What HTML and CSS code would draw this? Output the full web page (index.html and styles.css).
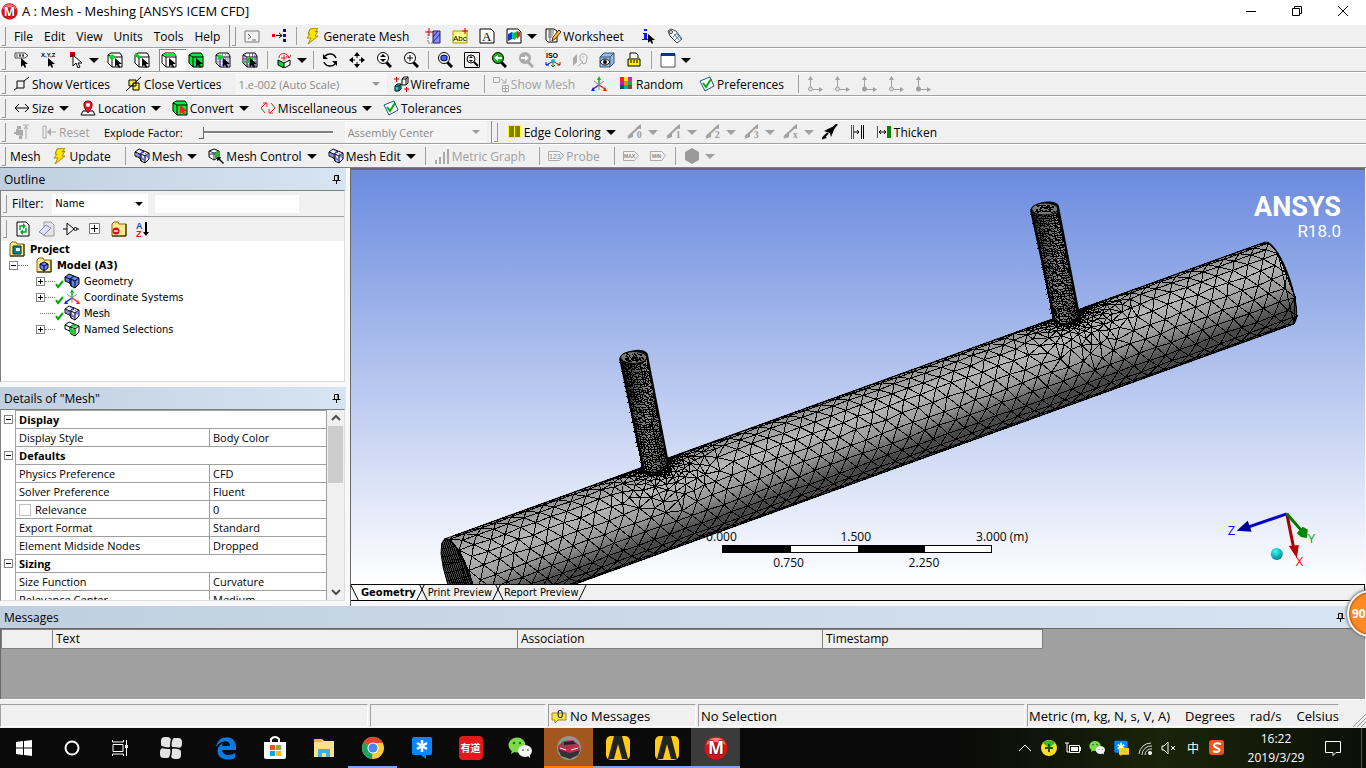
FILE: index.html
```html
<!DOCTYPE html>
<html lang="en">
<head>
    <meta charset="UTF-8">
    <meta name="viewport" content="width=device-width, initial-scale=1.0">
    <title>A : Mesh - Meshing [ANSYS ICEM CFD]</title>
    <link rel="stylesheet" href="styles.css">
</head>
<body>
    <!-- icon sprite -->
    <svg class="sprite" aria-hidden="true">
        <symbol id="cursor" viewBox="0 0 16 16"><path d="M8 6v9l2-2 2 3 1-1-1-3h3z" fill="#000"/></symbol>
        <symbol id="box" viewBox="0 0 16 16"><path d="M1 3l3-2h9l2 3v11H5l-4-4z" fill="inherit" stroke="#000"/><path d="M1 3l4 2h10M5 5v10" fill="none" stroke="#000"/></symbol>
        <symbol id="cubes" viewBox="0 0 16 16"><path d="M1 4l4-3 5 2 5 2v6l-4 4-4-2-1-3-5-2z" fill="inherit" stroke="#000"/><path d="M1 4l5 2 4-3M6 6v5M7 6l4 2 4-3M11 8v7M7 6v7" fill="none" stroke="#000"/></symbol>
        <symbol id="lens" viewBox="0 0 16 16"><path d="M10 10l5 5" stroke="#000" stroke-width="3"/><circle cx="7" cy="6" r="5.500" fill="inherit" stroke="#000"/></symbol>
        <symbol id="console" viewBox="0 0 16 16"><path d="M1 3h14v11H1z" fill="#f4f4f4" stroke="#777"/><path d="M4 6l3 3-3 2M8 12h4" fill="none" stroke="#666"/></symbol>
        <symbol id="branch" viewBox="0 0 16 16"><path d="M1 6h3v3H1z" fill="#e00"/><path d="M12 1h3v3h-3zM12 6h3v3h-3zM12 11h3v3h-3z" fill="#00f"/><path d="M5 7.500h5M8 5l3 2.500L8 10" fill="none" stroke="#000"/></symbol>
        <symbol id="bolt" viewBox="0 0 16 16"><path d="M5 1l8-1-3 4 3-1-3 5h3L3 16l3-6H2l3-4H3z" fill="#ffe600" stroke="#a80"/></symbol>
        <symbol id="section" viewBox="0 0 16 16"><path d="M8 3h7v12H8z" fill="#88f" stroke="#225"/><path d="M3 3v12h5" fill="none" stroke="#777" stroke-dasharray="2 1"/><path d="M8 9l5-6M8 14l7-8" stroke="#226"/><path d="M0 4h9M4 0v8" stroke="#d00"/></symbol>
        <symbol id="abc" viewBox="0 0 16 16"><path d="M1 3h14v12H1z" fill="#ffff8c" stroke="#a90"/><text x="1" y="13" font-size="8" font-family="Liberation Sans">Abc</text><path d="M10 3h6M13 0v6" stroke="#d00"/></symbol>
        <symbol id="letter" viewBox="0 0 16 16"><path d="M1 1h11l3 3v11H1z" fill="#fff" stroke="#000"/><text x="3" y="13" font-size="13" font-family="Liberation Serif">A</text></symbol>
        <symbol id="palette" viewBox="0 0 16 16"><path d="M1 1h11l3 3v11H1z" fill="#fff" stroke="#000"/><path d="M2 6l4-2v7l-4 2z" fill="#13c"/><path d="M6 4l3 1v7l-3-1z" fill="#0bd"/><path d="M8 5l3-2v6l-3 3z" fill="#1b2"/><path d="M11 3l3 1v4l-3 3z" fill="#e22"/></symbol>
        <symbol id="sheet" viewBox="0 0 16 16"><path d="M1 1h8l3 2v11H3L1 12z" fill="#fff" stroke="#000"/><path d="M3 3h6M3 5h6M3 7h5M3 9h4M5 1v12" stroke="#666"/><path d="M7 13l1-4 6-7 2 2-6 7z" fill="#fc3" stroke="#520"/></symbol>
        <symbol id="info" viewBox="0 0 16 16"><path d="M4 1h3v2H4zM3 5h4v6h2v1H2v-1h2V6H3z" fill="#11f"/><use href="#cursor"/></symbol>
        <symbol id="tag" viewBox="0 0 16 16"><path d="M1 3l3-2 5 2 6 8-5 4-7-7z" fill="#fff" stroke="#444"/><circle cx="4" cy="4" r="1.500" fill="none" stroke="#444"/><path d="M7 6l5 6M9 5l5 6M6 9l4-4M8 12l4-4" stroke="#48b"/></symbol>
        <symbol id="label-pick" viewBox="0 0 16 16"><path d="M1 1h10l3 2.500L11 6H1z" fill="#fff" stroke="#444"/><path d="M3 2v3M5.500 2.500h1v2h-1zM8.500 2.500h1v2h-1z" fill="none" stroke="#444"/><path d="M7 6v9l2-2 2 3 1-1-1-3h3z"/></symbol>
        <symbol id="xyz" viewBox="0 0 16 16"><text x="0" y="5" font-size="6" font-weight="bold" font-family="Liberation Sans">X,Y,Z</text><path d="M7 6v9l2-2 2 3 1-1-1-3h3z"/></symbol>
        <symbol id="pick" viewBox="0 0 16 16"><path d="M2 0h5v5H2z" fill="#b00"/><path d="M5 3v11l3-3 2 5 2-1-2-4h4z" fill="#fff" stroke="#000"/></symbol>
        <symbol id="vertex" viewBox="0 0 16 16"><use href="#box" fill="#fff"/><circle cx="5" cy="5" r="2.500" fill="#0d2"/><use href="#cursor"/></symbol>
        <symbol id="edge" viewBox="0 0 16 16"><use href="#box" fill="#fff"/><path d="M1 2l5 4" stroke="#0c2" stroke-width="3"/><use href="#cursor"/></symbol>
        <symbol id="face" viewBox="0 0 16 16"><use href="#box" fill="#fff"/><path d="M2 3l3-2h8l2 3H5z" fill="#0e3"/><use href="#cursor"/></symbol>
        <symbol id="body" viewBox="0 0 16 16"><use href="#box" fill="#0e3"/><use href="#cursor"/></symbol>
        <symbol id="node" viewBox="0 0 16 16"><use href="#box" fill="#fff"/><path d="M3 2v11M7.500 1v14M10.500 1v14M13 2v13M1 7h14M2 10h13M4 13h11" stroke="#77c" stroke-width="0.700"/><circle cx="5" cy="5" r="2.500" fill="#0d2"/><use href="#cursor"/></symbol>
        <symbol id="element" viewBox="0 0 16 16"><use href="#box" fill="#fff"/><path d="M3 2v11M7.500 1v14M10.500 1v14M13 2v13M1 7h14M2 10h13M4 13h11" stroke="#448" stroke-width="0.800"/><path d="M5 5h6v6H5z" fill="#0c2"/><use href="#cursor"/></symbol>
        <symbol id="view-rot" viewBox="0 0 16 16"><path d="M2 8l6 3v5l-6-3z" fill="#0d2" stroke="#000"/><path d="M8 11l6-3v5l-6 3z" fill="#fff" stroke="#000"/><path d="M3 6c0-6 9-6 10 0M13 6l-3-2M13 6l2-3M8 3v6M5 6h6" fill="none" stroke="#c22"/></symbol>
        <symbol id="rotate" viewBox="0 0 16 16"><path d="M14 6C12 1 6 1 3 4M2 10c2 5 8 5 11 2" fill="none" stroke="#000" stroke-width="1.500"/><path d="M1 2v5h5zM15 14V9h-5z"/></symbol>
        <symbol id="pan" viewBox="0 0 16 16"><path d="M8 2v4M8 10v4M2 8h4M10 8h4" stroke="#000"/><path d="M8 0l3 4H5zM8 16l3-4H5zM0 8l4-3v6zM16 8l-4-3v6z"/></symbol>
        <symbol id="zoom-ud" viewBox="0 0 16 16"><use href="#lens" fill="#fff"/><path d="M7 2l3 3H4zM7 10l3-3H4z"/></symbol>
        <symbol id="zoom-in" viewBox="0 0 16 16"><use href="#lens" fill="#fff"/><path d="M7 3v6M4 6h6" stroke="#000"/></symbol>
        <symbol id="zoom-cube" viewBox="0 0 16 16"><use href="#lens" fill="#fff"/><path d="M4 4l3-1 3 1v4L7 9 4 8z" fill="#46f" stroke="#003"/></symbol>
        <symbol id="zoom-fit" viewBox="0 0 16 16"><path d="M0.500 0.500h15v15h-15z" fill="none" stroke="#000"/><path d="M10 10l4 4" stroke="#000" stroke-width="2"/><circle cx="7" cy="7" r="4" fill="#fff" stroke="#000"/><path d="M7 4l2 2H5zM7 10l2-2H5z"/></symbol>
        <symbol id="zoom-prev" viewBox="0 0 16 16"><use href="#lens" fill="#2a2"/><path d="M3 6l4-3v2h4v2H7v2z" fill="#fff"/></symbol>
        <symbol id="zoom-next" viewBox="0 0 16 16"><path d="M10 10l5 5" stroke="#aaa" stroke-width="3"/><circle cx="7" cy="6" r="6" fill="#aaa"/><path d="M11 6L7 3v2H3v2h4v2z" fill="#fff"/></symbol>
        <symbol id="iso" viewBox="0 0 16 16"><text x="1" y="6" font-size="7" font-weight="bold" font-family="Liberation Sans">ISO</text><path d="M8 8v7M6 13l2 2 2-2" fill="none" stroke="#080"/><path d="M7 10l-6 3M1 10v3h3" fill="none" stroke="#00c"/><path d="M9 10l6 3M15 10v3h-3" fill="none" stroke="#d00"/><circle cx="8" cy="9" r="2" fill="#0bb"/></symbol>
        <symbol id="look" viewBox="0 0 16 16"><path d="M1 6l4-4v8l-4 4z" fill="#aaa"/><path d="M8 4c2-4 7-2 7 2l-1 5-3 1-1-3-2-1z" fill="none" stroke="#aaa"/><path d="M6 14l5-4M10 5h2" stroke="#aaa"/></symbol>
        <symbol id="eye-cube" viewBox="0 0 16 16"><path d="M1 5l4-4h10v10l-4 4H1z" fill="#9bd" stroke="#357"/><path d="M1 5h10v10M11 5l4-4" fill="none" stroke="#357"/><path d="M1 10c3-4 7-4 10 0-3 4-7 4-10 0" fill="#fff" stroke="#000"/><circle cx="6" cy="10" r="2"/></symbol>
        <symbol id="print" viewBox="0 0 16 16"><path d="M4 6V1h6l2 2v3" fill="#fff" stroke="#000"/><path d="M2 7h12v7H2z" fill="#fe0" stroke="#000"/><path d="M5 8v3M8 8v3M11 8v3" stroke="#000"/></symbol>
        <symbol id="window" viewBox="0 0 16 16"><path d="M1 2h14v13H1z" fill="#fff" stroke="#555"/><path d="M1 1h14v3H1z" fill="#013a7c"/></symbol>
        <symbol id="show-vert" viewBox="0 0 16 16"><path d="M3 5h7v7H3zM0 14l3-2M10 5l5-4" fill="none" stroke="#000"/></symbol>
        <symbol id="close-vert" viewBox="0 0 16 16"><path d="M3 4h7v6H3zM7 7h6v7H7z" fill="#fe3" stroke="#000"/><path d="M0 15l15-14" stroke="#000"/></symbol>
        <symbol id="wire" viewBox="0 0 16 16"><path d="M2 10l2-2h4v5l-2 2H2zM2 10h4v5M6 10l2-2" fill="#0dd" stroke="#000"/><path d="M9 3l2-2h4v6l-2 2H9zM9 3h4v6M13 3l2-2" fill="#fff" stroke="#000"/><path d="M1 3h5M3.500 1v5M11 13h5M13.500 11v5" stroke="#d00"/></symbol>
        <symbol id="show-mesh" viewBox="0 0 16 16"><path d="M0.500 1.500h6v5h-6zM9.500 9.500h6v6h-6zM9 12.500h6M12.500 9v6M8 3l5 4M13 3v4H9" fill="none" stroke="#aaa"/></symbol>
        <symbol id="axes" viewBox="0 0 16 16"><path d="M8 9V2" stroke="#0b2" stroke-width="1.500"/><path d="M8 0l2 4H6z" fill="#0b2"/><path d="M8 9l6 4" stroke="#e22" stroke-width="1.500"/><path d="M16 15h-4l2-4z" fill="#e22"/><path d="M8 9l-6 4" stroke="#22d" stroke-width="1.500"/><path d="M0 15h4l-2-4z" fill="#22d"/><path d="M8 9l5-4M8 9L3 5M8 9v5" stroke="#888"/></symbol>
        <symbol id="random" viewBox="0 0 16 16"><path d="M2 1h4v4H2z" fill="#e22"/><path d="M6 1h4v4H6z" fill="#fe0"/><path d="M10 1h4v4h-4z" fill="#c2c"/><path d="M2 5h4v4H2z" fill="#a2c"/><path d="M6 5h4v4H6z" fill="#e80"/><path d="M10 5h4v4h-4z" fill="#2a3"/><path d="M2 9h4v4H2z" fill="#055"/><path d="M6 9h4v4H6z" fill="#0ad"/><path d="M10 9h4v4h-4z" fill="#a33"/></symbol>
        <symbol id="prefs" viewBox="0 0 16 16"><path d="M1 5l10-4 4 9-9 5z" fill="#fff" stroke="#258"/><path d="M4 7l3 4 5-8" fill="none" stroke="#0a1" stroke-width="2"/></symbol>
        <symbol id="csys" viewBox="0 0 16 16"><path d="M3.500 12V3M5 13.500h9" stroke="#a0a0a0"/><path d="M3.500 0L6 4H1zM16 13.500L12 11v5z" fill="#a0a0a0"/><circle cx="3.500" cy="13" r="2" fill="#ddd" stroke="#a0a0a0"/></symbol>
        <symbol id="csys-solid" viewBox="0 0 16 16"><path d="M3.500 12V3M5 13.500h9" stroke="#a0a0a0"/><path d="M3.500 0L6 4H1zM16 13.500L12 11v5z" fill="#a0a0a0"/><circle cx="3.500" cy="13" r="2.500" fill="#a0a0a0"/></symbol>
        <symbol id="size" viewBox="0 0 16 16"><path d="M1 8h14M5 4L1 8l4 4M11 4l4 4-4 4" fill="none" stroke="#000"/></symbol>
        <symbol id="pin" viewBox="0 0 16 16"><path d="M1 15l2-4h10l2 4z" fill="#fff" stroke="#000"/><path d="M8 13C2 6 3 1 8 1s6 5 0 12z" fill="#e13" stroke="#800"/><circle cx="8" cy="5" r="2" fill="#fff"/></symbol>
        <symbol id="convert" viewBox="0 0 16 16"><use href="#box" fill="#0e3"/><path d="M8 5v9l2-2 2 3 1-1-1-3h3z" fill="#e22"/></symbol>
        <symbol id="misc" viewBox="0 0 16 16"><path d="M6 3L1 8l4 5M10 13l5-5-4-5M3 3h4v4M13 13H9V9" fill="none" stroke="#e02020"/></symbol>
        <symbol id="explode" viewBox="0 0 16 16"><path d="M3 2h4v3H3zM2 5l7 1v6l-7-1zM5 12h3v3H5zM0 8h3v2H0z" fill="#aaa"/><path d="M12 3v12M10 5l2-3 2 3M9 1h6" fill="none" stroke="#aaa"/></symbol>
        <symbol id="reset" viewBox="0 0 16 16"><path d="M2 2h3v12H2zM7 8h8" fill="none" stroke="#aaa"/><path d="M6 8l4-4v8z" fill="#aaa"/></symbol>
        <symbol id="edge-color" viewBox="0 0 16 16"><path d="M2 1h13v13H2z" fill="#ff0"/><path d="M3 2h5v11H3zM9 2h5v11H9z" fill="#808000"/></symbol>
        <symbol id="stroke" viewBox="0 0 16 16"><path d="M1 13L13 2" stroke="#a0a0a0" stroke-width="2"/><path d="M0 15l6-6v4zM14 0v5l-5-1z" fill="#a0a0a0"/></symbol>
        <symbol id="dart" viewBox="0 0 16 16"><path d="M0 15L6 9M15 0L9 7" stroke="#000" stroke-width="2"/><path d="M2 7l12-6-5 12-1-4zM1 15l1-4 3 3z"/></symbol>
        <symbol id="gap" viewBox="0 0 16 16"><path d="M2.500 1v14M4.500 1v14" stroke="#b22"/><path d="M12.500 1v14M14.500 1v14M5 8h5M8 6l2 2-2 2" fill="none" stroke="#000"/></symbol>
        <symbol id="thicken" viewBox="0 0 16 16"><path d="M1.500 2v12" stroke="#080"/><path d="M11 2h4v12h-4z" fill="#080"/><path d="M3 8h7M5 6L3 8l2 2M8 6l2 2-2 2" fill="none" stroke="#000"/></symbol>
        <symbol id="mesh-cube" viewBox="0 0 16 16"><use href="#cubes" fill="#eef"/><path d="M2 5l4 5M5 1l5 4M1 8l9-4M7 8l4 6M8 12l7-5M11 5l4 6" stroke="#44d" stroke-width="0.800" fill="none"/></symbol>
        <symbol id="mesh-ctrl" viewBox="0 0 16 16"><path d="M1 3l5-2 5 2v6l-5 3-5-3z" fill="#fff" stroke="#000"/><path d="M1 3l5 2 5-2M6 5v7M1 6l10 0" fill="none" stroke="#336"/><path d="M7 5l4-2v6l-4 2z" fill="#2b2"/><path d="M9 9v4l2-1 4 4 1-1-4-4 1-2z"/></symbol>
        <symbol id="bars" viewBox="0 0 16 16"><path d="M1 12h2v4H1zM5 9h2v7H5zM9 4h2v12H9zM13 1h2v15h-2z" fill="#aaa"/></symbol>
        <symbol id="probe" viewBox="0 0 16 16"><path d="M0.500 3.500h11l4 4-4 5h-11z" fill="#f4f4f4" stroke="#aaa"/><text x="1" y="11" font-size="7" fill="#888" font-family="Liberation Sans">123</text></symbol>
        <symbol id="max" viewBox="0 0 16 16"><path d="M0.500 3.500h11l4 4-4 5h-11z" fill="#f4f4f4" stroke="#aaa"/><text x="1" y="10" font-size="5" font-weight="bold" fill="#888" font-family="Liberation Sans">MAX</text></symbol>
        <symbol id="min" viewBox="0 0 16 16"><path d="M0.500 3.500h11l4 4-4 5h-11z" fill="#f4f4f4" stroke="#aaa"/><text x="2" y="10" font-size="5" font-weight="bold" fill="#888" font-family="Liberation Sans">MIN</text></symbol>
        <symbol id="hex" viewBox="0 0 16 16"><path d="M8 0l7 4v8l-7 4-7-4V4z" fill="#999"/></symbol>
        <symbol id="refresh" viewBox="0 0 16 16"><path d="M2 1h9l3 3v11H2z" fill="#fff" stroke="#000"/><path d="M5 9V5h3M11 7v4H8" fill="none" stroke="#0a2" stroke-width="1.500"/><path d="M8 2l3 3-3 3zM8 14l-3-3 3-3z" fill="#0a2"/></symbol>
        <symbol id="eraser" viewBox="0 0 16 16"><path d="M5 1h7l3 3v11H5z" fill="#e4e4e4" stroke="#999"/><path d="M0 11l7-7 5 3-7 7z" fill="#dde0ff" stroke="#88a"/></symbol>
        <symbol id="gate" viewBox="0 0 16 16"><path d="M0 8h4M4 2v12l7-6zM14 8h2" fill="#fff" stroke="#000"/><circle cx="12.500" cy="8" r="1.500" fill="#fff" stroke="#000"/></symbol>
        <symbol id="plus-box" viewBox="0 0 16 16"><path d="M2.500 2.500h10v10h-10z" fill="#fff" stroke="#777"/><path d="M4 7.500h7M7.500 4v7" stroke="#000"/></symbol>
        <symbol id="folder" viewBox="0 0 16 16"><path d="M1 3l2-2h4l1 2h7v12H1z" fill="#ffe98c" stroke="#860"/><path d="M15 3v12H1" fill="none" stroke="#220"/></symbol>
        <symbol id="folder-stop" viewBox="0 0 16 16"><use href="#folder"/><circle cx="5" cy="10" r="3.500" fill="#c12"/><path d="M3 10h4" stroke="#fff" stroke-width="1.500"/></symbol>
        <symbol id="sort" viewBox="0 0 16 16"><text x="1" y="8" font-size="9" font-weight="bold" fill="#24a" font-family="Liberation Sans">A</text><text x="1" y="16" font-size="9" font-weight="bold" fill="#c22" font-family="Liberation Sans">Z</text><path d="M11 1v11" stroke="#000" stroke-width="2"/><path d="M8 11h6l-3 4z"/></symbol>
        <symbol id="project" viewBox="0 0 16 16"><use href="#folder"/><path d="M4 5h8v8H4z" fill="#088" stroke="#033"/><path d="M7 7h4v3H7z" fill="#fff"/></symbol>
        <symbol id="model" viewBox="0 0 16 16"><use href="#folder"/><path d="M4 7l4-2 4 2v4l-4 3-4-3z" fill="#68f" stroke="#003"/><path d="M4 7l4 2 4-2M8 9v5" fill="none" stroke="#003"/></symbol>
        <symbol id="named" viewBox="0 0 16 16"><use href="#cubes" fill="#fff"/><path d="M6 7l5 2v5l-5-2z" fill="#2c3"/><path d="M7 5l4 2 2-2-4-2z" fill="#2c3"/></symbol>
        <symbol id="tick" viewBox="0 0 9 16"><path d="M1 11l2 3 5-6" fill="none" stroke="#0a0" stroke-width="2"/></symbol>
        <symbol id="tack" viewBox="0 0 10 10"><path d="M2.500 6V1.500h4V6M0.500 6.500h8M4.500 7v3M6 1v5" fill="none" stroke="#000"/></symbol>
        <symbol id="ansys" viewBox="0 0 24 24"><rect width="24" height="24" rx="5" fill="#fc1"/><path d="M2 23L8 0h8l6 23h-6L12 8 8 23z" fill="#222"/></symbol>
        <symbol id="wechat" viewBox="0 0 24 24"><ellipse cx="9" cy="9" rx="8.500" ry="7.500" fill="#7ddb4a"/><path d="M4 14l-1 4 5-3z" fill="#7ddb4a"/><circle cx="6" cy="7" r="1.200" fill="#263"/><circle cx="12" cy="7" r="1.200" fill="#263"/><ellipse cx="17" cy="15" rx="7" ry="6" fill="#f4f4f4"/><path d="M19 19l3 3v-5z" fill="#f4f4f4"/><circle cx="15" cy="14" r="1" fill="#777"/><circle cx="20" cy="14" r="1" fill="#777"/></symbol>
        <symbol id="star" viewBox="0 0 24 24"><path d="M4 1h16q2 0 2 2v14q0 2-2 2h-4v4l-5-4H4q-2 0-2-2V3q0-2 2-2z" fill="#08f"/><path d="M12 4v12M7 7l10 6M17 7L7 13" stroke="#fff" stroke-width="2.500"/></symbol>
        <symbol id="red-m" viewBox="0 0 24 24"><circle cx="12" cy="12" r="11.500" fill="#d8121b"/><path d="M2 9a10.500 10.500 0 0 1 20 0q-10-6-20 0z" fill="#f77"/><text x="12" y="18" text-anchor="middle" font-size="17" font-weight="bold" fill="#fff" stroke="#500" stroke-width="1" paint-order="stroke" font-family="Open Sans">M</text></symbol>
    </svg>

    <header class="titlebar">
        <svg class="app-icon"><use href="#red-m"/></svg>
        <h1>A : Mesh - Meshing [ANSYS ICEM CFD]</h1>
        <div class="window-buttons">
            <button aria-label="Minimize"><svg viewBox="0 0 12 12"><path d="M1 6.500h10"/></svg></button>
            <button aria-label="Restore"><svg viewBox="0 0 12 12"><path d="M1.500 3.500h7v7h-7zM3.500 3V1.500h7v7H9"/></svg></button>
            <button aria-label="Close"><svg viewBox="0 0 12 12"><path d="M1 1l10 10M11 1L1 11"/></svg></button>
        </div>
    </header>

    <div class="toolbar">
        <nav class="band menu">
            <a href="#">File</a><a href="#">Edit</a><a href="#">View</a><a href="#">Units</a><a href="#">Tools</a><a href="#">Help</a>
        </nav>
        <div class="band">
            <button class="tool" aria-label="Console"><svg><use href="#console"/></svg></button>
            <button class="tool" aria-label="Branch"><svg><use href="#branch"/></svg></button>
            <i class="sep"></i>
            <button class="tool text"><svg><use href="#bolt"/></svg>Generate Mesh</button>
            <button class="tool" aria-label="Section plane"><svg><use href="#section"/></svg></button>
            <button class="tool" aria-label="Annotation"><svg><use href="#abc"/></svg></button>
            <button class="tool" aria-label="Comment"><svg><use href="#letter"/></svg></button>
            <button class="tool drop" aria-label="Figure"><svg><use href="#palette"/></svg><i class="arrow"></i></button>
            <button class="tool text"><svg><use href="#sheet"/></svg>Worksheet</button>
            <button class="tool" aria-label="Selection information"><svg><use href="#info"/></svg></button>
            <button class="tool" aria-label="Tags"><svg><use href="#tag"/></svg></button>
        </div>
    </div>

    <div class="toolbar">
        <div class="band">
            <button class="tool" aria-label="Label"><svg><use href="#label-pick"/></svg></button>
            <button class="tool" aria-label="Coordinates"><svg><use href="#xyz"/></svg></button>
            <button class="tool drop" aria-label="Select mode"><svg><use href="#pick"/></svg><i class="arrow"></i></button>
            <button class="tool" aria-label="Vertex"><svg><use href="#vertex"/></svg></button>
            <button class="tool" aria-label="Edge"><svg><use href="#edge"/></svg></button>
            <button class="tool pressed" aria-label="Face"><svg><use href="#face"/></svg></button>
            <button class="tool" aria-label="Body"><svg><use href="#body"/></svg></button>
            <button class="tool" aria-label="Node"><svg><use href="#node"/></svg></button>
            <button class="tool" aria-label="Element"><svg><use href="#element"/></svg></button>
            <i class="sep"></i>
            <button class="tool drop" aria-label="Extend"><svg><use href="#view-rot"/></svg><i class="arrow"></i></button>
            <i class="sep"></i>
            <button class="tool" aria-label="Rotate"><svg><use href="#rotate"/></svg></button>
            <button class="tool" aria-label="Pan"><svg><use href="#pan"/></svg></button>
            <button class="tool" aria-label="Zoom"><svg><use href="#zoom-ud"/></svg></button>
            <button class="tool" aria-label="Zoom in"><svg><use href="#zoom-in"/></svg></button>
            <i class="sep"></i>
            <button class="tool" aria-label="Zoom to model"><svg><use href="#zoom-cube"/></svg></button>
            <button class="tool" aria-label="Zoom to fit"><svg><use href="#zoom-fit"/></svg></button>
            <button class="tool" aria-label="Previous view"><svg><use href="#zoom-prev"/></svg></button>
            <button class="tool" aria-label="Next view" disabled><svg><use href="#zoom-next"/></svg></button>
            <button class="tool" aria-label="Isometric"><svg><use href="#iso"/></svg></button>
            <button class="tool" aria-label="Look at" disabled><svg><use href="#look"/></svg></button>
            <button class="tool" aria-label="Manage views"><svg><use href="#eye-cube"/></svg></button>
            <button class="tool" aria-label="Rescale"><svg><use href="#print"/></svg></button>
            <i class="sep"></i>
            <button class="tool drop" aria-label="Viewports"><svg><use href="#window"/></svg><i class="arrow"></i></button>
        </div>
    </div>

    <div class="toolbar">
        <div class="band">
            <button class="tool text"><svg><use href="#show-vert"/></svg>Show Vertices</button>
            <button class="tool text"><svg><use href="#close-vert"/></svg>Close Vertices</button>
            <span class="combo scale"><select disabled aria-label="Scale"><option>1.e-002 (Auto Scale)</option></select></span>
            <button class="tool text"><svg><use href="#wire"/></svg>Wireframe</button>
            <i class="sep"></i>
            <button class="tool text" disabled><svg><use href="#show-mesh"/></svg>Show Mesh</button>
            <button class="tool" aria-label="Triad"><svg><use href="#axes"/></svg></button>
            <button class="tool text"><svg><use href="#random"/></svg>Random</button>
            <button class="tool text"><svg><use href="#prefs"/></svg>Preferences</button>
            <i class="sep"></i>
            <button class="tool" aria-label="Axis 1" disabled><svg><use href="#csys"/></svg></button>
            <button class="tool" aria-label="Axis 2" disabled><svg><use href="#csys"/></svg></button>
            <button class="tool" aria-label="Axis 3" disabled><svg><use href="#csys-solid"/></svg></button>
            <button class="tool" aria-label="Axis 4" disabled><svg><use href="#csys"/></svg></button>
            <button class="tool" aria-label="Axis 5" disabled><svg><use href="#csys-solid"/></svg></button>
        </div>
    </div>

    <div class="toolbar">
        <div class="band">
            <button class="tool text drop"><svg><use href="#size"/></svg>Size<i class="arrow"></i></button>
            <button class="tool text drop"><svg><use href="#pin"/></svg>Location<i class="arrow"></i></button>
            <button class="tool text drop"><svg><use href="#convert"/></svg>Convert<i class="arrow"></i></button>
            <button class="tool text drop"><svg><use href="#misc"/></svg>Miscellaneous<i class="arrow"></i></button>
            <button class="tool text"><svg><use href="#prefs"/></svg>Tolerances</button>
        </div>
    </div>

    <div class="toolbar">
        <div class="band explode">
            <button class="tool" aria-label="Explode" disabled><svg><use href="#explode"/></svg></button>
            <button class="tool text" disabled><svg><use href="#reset"/></svg>Reset</button>
            <label for="factor">Explode Factor:</label>
            <input type="range" id="factor" min="0" max="100" value="0">
            <span class="combo center"><select disabled aria-label="Explode origin"><option>Assembly Center</option></select></span>
        </div>
        <div class="band">
            <button class="tool text drop"><svg><use href="#edge-color"/></svg>Edge Coloring<i class="arrow"></i></button>
            <button class="tool drop edge-style" disabled><svg><use href="#stroke"/></svg><sub>0</sub><i class="arrow"></i></button>
            <button class="tool drop edge-style" disabled><svg><use href="#stroke"/></svg><sub>1</sub><i class="arrow"></i></button>
            <button class="tool drop edge-style" disabled><svg><use href="#stroke"/></svg><sub>2</sub><i class="arrow"></i></button>
            <button class="tool drop edge-style" disabled><svg><use href="#stroke"/></svg><sub>3</sub><i class="arrow"></i></button>
            <button class="tool drop edge-style" disabled><svg><use href="#stroke"/></svg><sub>x</sub><i class="arrow"></i></button>
            <button class="tool" aria-label="Edge direction"><svg><use href="#dart"/></svg></button>
            <button class="tool" aria-label="Mesh connections"><svg><use href="#gap"/></svg></button>
            <button class="tool text"><svg><use href="#thicken"/></svg>Thicken</button>
        </div>
    </div>

    <div class="toolbar last">
        <div class="band context">
            <strong class="context-name">Mesh</strong>
            <button class="tool text"><svg><use href="#bolt"/></svg>Update</button>
            <i class="sep"></i>
            <button class="tool text drop"><svg><use href="#mesh-cube"/></svg>Mesh<i class="arrow"></i></button>
            <button class="tool text drop"><svg><use href="#mesh-ctrl"/></svg>Mesh Control<i class="arrow"></i></button>
            <button class="tool text drop"><svg><use href="#mesh-cube"/></svg>Mesh Edit<i class="arrow"></i></button>
            <i class="sep"></i>
            <button class="tool text" disabled><svg><use href="#bars"/></svg>Metric Graph</button>
            <i class="sep"></i>
            <button class="tool text" disabled><svg><use href="#probe"/></svg>Probe</button>
            <i class="sep"></i>
            <button class="tool" aria-label="Maximum" disabled><svg><use href="#max"/></svg></button>
            <button class="tool" aria-label="Minimum" disabled><svg><use href="#min"/></svg></button>
            <i class="sep"></i>
            <button class="tool drop" aria-label="Shape" disabled><svg><use href="#hex"/></svg><i class="arrow"></i></button>
        </div>
    </div>

    <main>
        <aside>
            <section class="panel">
                <h2>Outline <svg class="tack"><use href="#tack"/></svg></h2>
                <div class="panel-body">
                    <div class="filter">
                        <label for="filter">Filter:</label>
                        <span class="combo name"><select id="filter"><option>Name</option></select></span>
                        <input type="text" aria-label="Filter text">
                    </div>
                    <div class="outline-tools">
                        <button class="tool" aria-label="Refresh"><svg><use href="#refresh"/></svg></button>
                        <button class="tool" aria-label="Clear"><svg><use href="#eraser"/></svg></button>
                        <button class="tool" aria-label="Filter logic"><svg><use href="#gate"/></svg></button>
                        <button class="tool" aria-label="Expand all"><svg><use href="#plus-box"/></svg></button>
                        <button class="tool" aria-label="Hide folders"><svg><use href="#folder-stop"/></svg></button>
                        <button class="tool" aria-label="Sort"><svg><use href="#sort"/></svg></button>
                    </div>
                    <ul class="tree">
                        <li class="root"><svg><use href="#project"/></svg><b>Project</b></li>
                        <li class="level1"><i class="knob open"></i><i class="dots"></i><svg><use href="#model"/></svg><b>Model (A3)</b></li>
                        <li class="level2"><i class="knob"></i><i class="dots"></i><svg class="mark"><use href="#tick"/></svg><svg fill="#5a86f0"><use href="#cubes"/></svg><span>Geometry</span></li>
                        <li class="level2"><i class="knob"></i><i class="dots"></i><svg class="mark"><use href="#tick"/></svg><svg><use href="#axes"/></svg><span>Coordinate Systems</span></li>
                        <li class="level2"><i class="dots long"></i><svg class="mark"><use href="#tick"/></svg><svg><use href="#mesh-cube"/></svg><span class="selected">Mesh</span></li>
                        <li class="level2"><i class="knob"></i><i class="dots"></i><i class="mark"></i><svg><use href="#named"/></svg><span>Named Selections</span></li>
                    </ul>
                </div>
            </section>
            <section class="panel">
                <h2>Details of "Mesh" <svg class="tack"><use href="#tack"/></svg></h2>
                <div class="panel-body details">
                    <div class="table-clip">
                        <table>
                            <colgroup><col class="gutter"><col class="key"><col></colgroup>
                            <tr class="group"><td><i class="knob open"></i></td><th colspan="2">Display</th></tr>
                            <tr><td></td><td>Display Style</td><td>Body Color</td></tr>
                            <tr class="group"><td><i class="knob open"></i></td><th colspan="2">Defaults</th></tr>
                            <tr><td></td><td>Physics Preference</td><td>CFD</td></tr>
                            <tr><td></td><td>Solver Preference</td><td>Fluent</td></tr>
                            <tr><td></td><td><label><input type="checkbox">Relevance</label></td><td>0</td></tr>
                            <tr><td></td><td>Export Format</td><td>Standard</td></tr>
                            <tr><td></td><td>Element Midside Nodes</td><td>Dropped</td></tr>
                            <tr class="group"><td><i class="knob open"></i></td><th colspan="2">Sizing</th></tr>
                            <tr><td></td><td>Size Function</td><td>Curvature</td></tr>
                            <tr><td></td><td>Relevance Center</td><td>Medium</td></tr>
                        </table>
                    </div>
                    <div class="scrollbar">
                        <svg viewBox="0 0 16 16"><path d="M4 10l4-4 4 4"/></svg>
                        <div class="thumb"></div>
                        <svg viewBox="0 0 16 16"><path d="M4 6l4 4 4-4"/></svg>
                    </div>
                </div>
            </section>
        </aside>

        <section class="viewport">
            <div class="scene">
                <svg id="scene" viewBox="0 0 1013 413" preserveAspectRatio="xMaxYMid slice">
                    <defs>
                        <linearGradient id="pipe" gradientUnits="userSpaceOnUse" x1="480" y1="220" x2="508" y2="297">
                            <stop offset="0" stop-color="#666"/>
                            <stop offset="0.150" stop-color="#999"/>
                            <stop offset="0.400" stop-color="#b6b6b6"/>
                            <stop offset="0.700" stop-color="#999"/>
                            <stop offset="1" stop-color="#484848"/>
                        </linearGradient>
                        <linearGradient id="stub" x1="0" x2="1" y1="0" y2="0">
                            <stop offset="0" stop-color="#222"/>
                            <stop offset="0.600" stop-color="#8c8c8c"/>
                            <stop offset="1" stop-color="#444"/>
                        </linearGradient>
                        <radialGradient id="ball" cx="0.400" cy="0.300" r="0.700">
                            <stop offset="0" stop-color="#3ff"/>
                            <stop offset="1" stop-color="#088"/>
                        </radialGradient>
                    </defs>
                    <g id="model3d"></g>
                    <g class="scale-bar">
                        <path d="M372.500 374.500h268v7h-268z" fill="#fff" stroke="#000"/>
                        <path d="M373 374h67v8h-67zM507 374h67v8h-67z"/>
                        <text x="371" y="370">0.000</text>
                        <text x="505" y="370">1.500</text>
                        <text x="625" y="370" class="start">3.000 (m)</text>
                        <text x="438" y="396">0.750</text>
                        <text x="573" y="396">2.250</text>
                    </g>
                    <g class="triad">
                        <path d="M935 343l-38 13" stroke="#00c" stroke-width="3"/>
                        <path d="M885 360l11-10 4 11z" fill="#009"/>
                        <path d="M935 343l7 35" stroke="#a00" stroke-width="3"/>
                        <path d="M937 375l10-1-2 13z" fill="#b00"/>
                        <path d="M935 343l14 16" stroke="#070" stroke-width="3"/>
                        <path d="M945 362l6-6 5 3-1 8-6-1z" fill="#080"/>
                        <circle cx="925" cy="383" r="6" fill="url(#ball)"/>
                        <text x="876" y="364" fill="#00f">Z</text>
                        <text x="956" y="372" fill="#0a0">Y</text>
                        <text x="944" y="395" fill="#f00">X</text>
                    </g>
                </svg>
                <div class="brand"><strong>ANSYS</strong><span>R18.0</span></div>
            </div>
            <nav class="view-tabs">
                <a href="#" class="active">Geometry</a><a href="#">Print Preview</a><a href="#">Report Preview</a>
            </nav>
        </section>
    </main>

    <section class="messages">
        <h2>Messages <svg class="tack"><use href="#tack"/></svg></h2>
        <div class="messages-body">
            <table>
                <tr><th></th><th>Text</th><th>Association</th><th>Timestamp</th></tr>
            </table>
        </div>
        <button class="badge">90</button>
    </section>

    <footer class="status">
        <span class="cell cell-a"></span>
        <span class="cell cell-b"></span>
        <span class="cell cell-c"><svg viewBox="0 0 16 16"><path d="M1 5h14v7H7l-3 3v-3H1z" fill="#fd5" stroke="#a80"/><text x="6" y="10" font-size="11">0</text></svg>No Messages</span>
        <span class="cell cell-d">No Selection</span>
        <span class="cell cell-e"><span>Metric (m, kg, N, s, V, A)</span><span>Degrees</span><span>rad/s</span><span>Celsius</span></span>
        <svg class="size-grip" viewBox="0 0 14 14"><path d="M1 14L14 1M5 14l9-9M9 14l5-5" stroke="#999"/></svg>
    </footer>

    <div class="taskbar">
        <button aria-label="Start"><svg viewBox="0 0 16 16"><path d="M0 2l7-1v6.500H0zM8 1l8-1v7.500H8zM0 8.500h7V15l-7-1zM8 8.500h8V16l-8-1z" fill="#fff"/></svg></button>
        <button aria-label="Cortana"><svg viewBox="0 0 16 16"><circle cx="8" cy="8" r="6.500" fill="none" stroke="#fff" stroke-width="2"/></svg></button>
        <button aria-label="Task view"><svg viewBox="0 0 16 16"><path d="M1 4.500h10v7H1zM0.500 0v2h11V0M0.500 16v-2h11v2M14.500 0v16" fill="none" stroke="#fff"/><path d="M13 5h3v3h-3z" fill="#fff"/></svg></button>
        <button class="app first" aria-label="Fan"><svg viewBox="0 0 24 24"><g fill="#e4e4e4"><rect x="2" y="1" width="10" height="11" rx="4"/><rect x="12" y="2" width="11" height="10" rx="4"/><rect x="12" y="12" width="10" height="11" rx="4"/><rect x="1" y="12" width="11" height="10" rx="4"/></g><path d="M12 12Q6 13 1 10M12 12q-1-6 2-11M12 12q6-1 11 2M12 12q1 6-2 11" fill="none" stroke="#0a0a0a" stroke-width="1.500"/></svg></button>
        <button class="app" aria-label="Edge"><svg viewBox="0 0 24 24"><path d="M2 11C4-2 22-2 22 11v3H8c1 6 8 6 13 3v5C12 26 1 22 4 12 6 8 9 7 9 7c-1 2-1 3-1 3h8c0-7-10-6-14 1z" fill="#0a7ae0"/></svg></button>
        <button class="app" aria-label="Store"><svg viewBox="0 0 24 24"><path d="M8 7V3q4-4 8 0v4" fill="none" stroke="#fff" stroke-width="2"/><path d="M1 6h22v15q0 2-2 2H3q-2 0-2-2z" fill="#fff"/><path d="M7 9h5v5H7z" fill="#f25022"/><path d="M13 9h5v5h-5z" fill="#7fba00"/><path d="M7 15h5v5H7z" fill="#00a4ef"/><path d="M13 15h5v5h-5z" fill="#ffb900"/></svg></button>
        <button class="app" aria-label="Explorer"><svg viewBox="0 0 24 24"><path d="M2 3h8l2 2h10v16H2z" fill="#ffe08a"/><path d="M2 3h8v3H2z" fill="#f0b82c"/><path d="M6 21v-8h12v8h-4v-4h-4v4z" fill="#38b0ea"/></svg></button>
        <button class="app running" aria-label="Chrome"><svg viewBox="0 0 24 24"><circle cx="12" cy="12" r="11" fill="#fc3"/><path d="M12 12L2.500 6.500A11 11 0 0 1 22 7H12z" fill="#e14434"/><path d="M12 12L2.500 6.500A11 11 0 0 0 11 23z" fill="#1da260"/><circle cx="12" cy="12" r="5.500" fill="#fff"/><circle cx="12" cy="12" r="4.500" fill="#4587f3"/></svg></button>
        <button class="app" aria-label="Star chat"><svg><use href="#star"/></svg></button>
        <button class="app"><span class="youdao">有道</span></button>
        <button class="app" aria-label="WeChat"><svg><use href="#wechat"/></svg></button>
        <button class="app alert" aria-label="Chat"><svg viewBox="0 0 24 24"><circle cx="12" cy="12" r="12" fill="#8a9a94"/><path d="M1 10l5-5 10-1 6 5 1 6-9 4-12-3z" fill="#b8304c"/><path d="M7 6l9-1 3 3-12 1z" fill="#223"/><path d="M1 13l12 4 10-3-2 5-8 4-9-3z" fill="#333"/><path d="M3 12l6 2M14 14l7-2" stroke="#fff"/></svg></button>
        <button class="app running" aria-label="Workbench"><svg><use href="#ansys"/></svg></button>
        <button class="app running" aria-label="Workbench 2"><svg><use href="#ansys"/></svg></button>
        <button class="app running current" aria-label="Meshing"><svg><use href="#red-m"/></svg></button>
        <div class="tray">
            <button aria-label="Show hidden"><svg viewBox="0 0 16 16"><path d="M2 11l6-6 6 6" fill="none" stroke="#fff"/></svg></button>
            <button aria-label="Guard"><svg viewBox="0 0 16 16"><circle cx="8" cy="8" r="8" fill="#fd2"/><path d="M2 3a8 8 0 0 1 12 0L8 8z" fill="#3b3"/><path d="M8 4v8M4 8h8" stroke="#151" stroke-width="2"/></svg></button>
            <button aria-label="Battery"><svg viewBox="0 0 16 16"><path d="M4.500 5.500h10v7h-10zM2 3v3M0 3h4M2 6v6h2" fill="none" stroke="#fff"/><path d="M6 7h7v4H6zM15 7h1v4h-1z" fill="#fff"/></svg></button>
            <button aria-label="WeChat"><svg><use href="#wechat"/></svg></button>
            <button aria-label="Star chat"><svg viewBox="0 0 24 24"><use href="#star"/><path d="M9 12h15v10H14l-3 2v-2H9z" fill="#fc2"/></svg></button>
            <button aria-label="Wi-Fi"><svg viewBox="0 0 16 16"><path d="M2 14A12 12 0 0 1 14 3M5 15A9 9 0 0 1 15 6M8 15A6 6 0 0 1 15 9" fill="none" stroke="#ddd"/><circle cx="13" cy="13" r="2" fill="#fff"/></svg></button>
            <button aria-label="Muted"><svg viewBox="0 0 16 16"><path d="M1 6h2l4-4v12l-4-4H1zM10 6l4 4M14 6l-4 4" fill="none" stroke="#fff"/></svg></button>
            <button class="ime">中</button>
            <button aria-label="Input"><svg viewBox="0 0 16 16"><rect width="15" height="15" rx="3" fill="#f4511e"/><path d="M12 4C6 2 3 5 6 7l4 2c2 2-2 4-6 2" fill="none" stroke="#fff" stroke-width="2"/></svg></button>
        </div>
        <time class="clock"><span>16:22</span><span>2019/3/29</span></time>
        <button class="notify" aria-label="Notifications"><svg viewBox="0 0 16 16"><path d="M0.500 1.500h15v11H11l-3 3v-3H0.500z" fill="none" stroke="#fff"/></svg></button>
    </div>
    <script src="mesh.js"></script>
</body>
</html>
```
FILE: styles.css
```css
* {
    margin: 0;
    padding: 0;
    box-sizing: border-box;
}

body {
    height: 100vh;
    display: flex;
    flex-direction: column;
    overflow: hidden;
    background: #f0f0f0;
    color: #000;
    font-family: 'Open Sans', 'Noto Sans CJK SC', sans-serif;
    font-size: 12px;
}

button, select, input {
    font: inherit;
    color: inherit;
    border: none;
    background: none;
}

button {
    display: flex;
    align-items: center;
    white-space: nowrap;
}

a {
    color: inherit;
    text-decoration: none;
}

.sprite {
    display: none;
}

/* title bar */
.titlebar {
    display: flex;
    align-items: center;
    height: 24px;
    padding-bottom: 2px;
    background: #fff;
    flex: none;
}

.app-icon {
    width: 17px;
    height: 17px;
    margin: 0 4px 0 1px;
}

.titlebar h1 {
    font-size: 13px;
    line-height: 20px;
    font-weight: 400;
    flex: 1;
}

.window-buttons {
    display: flex;
}

.window-buttons button {
    width: 46px;
    justify-content: center;
}

.window-buttons svg {
    width: 12px;
    height: 12px;
    fill: none;
    stroke: #000;
}

/* toolbars */
.toolbar {
    display: flex;
    height: 24px;
    flex: none;
    border-top: 1px solid #fff;
    border-bottom: 1px solid #a0a0a0;
}

.toolbar.last {
    border-bottom-color: #808080;
}

.band {
    display: flex;
    align-items: center;
}

.band::before {
    content: '';
    width: 3px;
    height: 18px;
    margin: 0 6px 0 2px;
    border-right: 1px solid #999;
    border-bottom: 1px solid #999;
    flex: none;
}

.band.context::before {
    margin-right: 4px;
}

.menu,
.explode {
    border-right: 1px solid #909090;
    padding-right: 5px;
}

.menu {
    padding-right: 0;
}

.menu a {
    padding: 0 7px 0 2px;
    margin-right: 2px;
}

.tool {
    height: 22px;
    padding-right: 7px;
}

.tool svg {
    width: 16px;
    height: 16px;
    margin: 0 2px;
}

.tool.text {
    padding-right: 14px;
}

.tool.drop {
    padding-right: 6px;
}

.tool.text.drop {
    padding-right: 9px;
}

.tool:disabled {
    color: #a0a0a0;
}

.tool.pressed {
    background: #fafafa;
    box-shadow: inset 1px 1px #888;
}

.arrow {
    border: 5px solid transparent;
    border-top-color: #000;
    border-bottom: none;
    margin-left: 3px;
}

.tool.text .arrow {
    margin-left: 5px;
}

.tool:disabled .arrow {
    border-top-color: #a0a0a0;
}

.sep {
    height: 18px;
    border-left: 1px solid #a0a0a0;
    margin-right: 6px;
}

.context-name {
    font-weight: 400;
    margin-right: 9px;
}

.edge-style {
    position: relative;
}

.edge-style sub {
    position: absolute;
    left: 12px;
    top: 8px;
    font: bold 10px/12px 'Liberation Serif', serif;
}

.combo {
    position: relative;
    display: flex;
    align-items: center;
    background: #f4f4f4;
    border: 1px solid #fafafa;
}

.combo select {
    appearance: none;
    width: 100%;
    height: 18px;
    padding-left: 2px;
    font-size: 11px;
    opacity: 1;
}

.combo select:disabled {
    color: #888;
}

.combo::after {
    content: '';
    position: absolute;
    right: 5px;
    border: 4px solid transparent;
    border-top-color: #999;
    border-bottom: none;
}

.combo.scale {
    width: 150px;
    margin-right: 5px;
}

.combo.center {
    width: 141px;
}

.explode label {
    margin-right: 16px;
    font-size: 11px;
}

input[type="range"] {
    appearance: none;
    width: 134px;
    height: 16px;
    margin-right: 12px;
}

input[type="range"]::-webkit-slider-runnable-track {
    height: 3px;
    background: #808080;
    border-bottom: 1px solid #fff;
}

input[type="range"]::-webkit-slider-thumb {
    appearance: none;
    width: 5px;
    height: 12px;
    margin-top: -4px;
    background: #f0f0f0;
    border-right: 1px solid #666;
    border-bottom: 1px solid #666;
}

/* main area */
main {
    display: flex;
    flex: 1;
    gap: 4px;
    min-height: 0;
    background: #f8f8f8;
}

aside {
    width: 346px;
    flex: none;
    display: flex;
    flex-direction: column;
}

.panel {
    flex: 1 1 0;
    min-height: 0;
    display: flex;
    flex-direction: column;
    padding-bottom: 5px;
}

h2 {
    display: flex;
    justify-content: space-between;
    align-items: center;
    height: 22px;
    flex: none;
    padding: 0 4px;
    font-size: 12px;
    font-weight: 400;
    background: linear-gradient(90deg, #c0cfdf, #d7e4f2);
}

.tack {
    width: 10px;
    height: 10px;
}

.panel-body {
    flex: 1;
    min-height: 0;
    overflow: hidden;
    background: #fff;
    border: 1px solid #808080;
    border-right-color: #ddd;
    border-bottom-color: #ddd;
    margin-right: 1px;
}

.filter,
.outline-tools {
    display: flex;
    align-items: center;
    height: 24px;
    background: #f0f0f0;
}

.filter {
    height: 26px;
    border-bottom: 1px solid #a0a0a0;
}

.filter::before,
.outline-tools::before {
    content: '';
    width: 3px;
    height: 17px;
    margin-left: 2px;
    border-right: 1px solid #999;
    border-bottom: 1px solid #999;
}

.filter label {
    margin: 0 9px 0 5px;
}

.combo.name {
    width: 96px;
    background: #fff;
    border-color: #fff;
    margin-right: 7px;
}

.combo.name select {
    font-family: 'DejaVu Sans Condensed', 'DejaVu Sans', sans-serif;
}

.combo.name::after {
    right: 4px;
    border-top-color: #000;
}

.filter input {
    width: 144px;
    height: 18px;
    background: #fff;
}

.outline-tools {
    gap: 4px;
}

.outline-tools .tool {
    padding-right: 0;
}

.outline-tools::before {
    margin-right: 2px;
}

.tree {
    list-style: none;
    font-family: 'DejaVu Sans Condensed', 'DejaVu Sans', sans-serif;
    font-size: 11px;
}

.tree li {
    display: flex;
    align-items: center;
    height: 16px;
}

.tree svg {
    width: 16px;
    height: 16px;
    flex: none;
}

.tree .root {
    padding-left: 8px;
}

.tree .level1 {
    padding-left: 8px;
}

.tree .level2 {
    padding-left: 35px;
}

.tree b {
    margin-left: 5px;
}

.tree span {
    padding: 0 2px;
    margin-left: 2px;
}

.tree .selected {
    background: #f0f0f0;
}

.tree .mark {
    width: 9px;
    overflow: visible;
}

.knob {
    display: block;
    position: relative;
    width: 9px;
    height: 9px;
    border: 1px solid #848484;
    background: #fff;
    flex: none;
}

.knob::before,
.knob::after {
    content: '';
    position: absolute;
    background: #000;
}

.knob::before {
    left: 1px;
    top: 3px;
    width: 5px;
    height: 1px;
}

.knob::after {
    left: 3px;
    top: 1px;
    width: 1px;
    height: 5px;
}

.knob.open::after {
    display: none;
}

.dots {
    width: 10px;
    border-top: 1px dotted #808080;
}

.dots.long {
    width: 15px;
    margin-left: 4px;
}

.level1 .dots {
    margin-right: 8px;
}

/* details table */
.details {
    display: flex;
}

.table-clip {
    flex: 1;
    overflow: hidden;
}

.details table {
    width: 100%;
    border-collapse: collapse;
    table-layout: fixed;
}

.gutter { width: 14px; }
.key { width: 194px; }

.details td,
.details th {
    border: 1px solid #a0a0a0;
    padding: 0 3px;
    font-size: 11px;
    line-height: 16px;
    height: 18px;
    text-align: left;
    white-space: nowrap;
}

.details td:first-child {
    padding: 0 0 0 2px;
    border-color: transparent #a0a0a0 transparent transparent;
}

.details label {
    display: flex;
    align-items: center;
    gap: 4px;
}

.details input {
    appearance: none;
    width: 12px;
    height: 12px;
    border: 1px solid #c0c0c0;
    background: #fff;
}

.scrollbar {
    width: 17px;
    background: #f0f0f0;
    display: flex;
    flex-direction: column;
    align-items: center;
}

.scrollbar svg {
    width: 16px;
    height: 16px;
    fill: none;
    stroke: #505050;
    stroke-width: 2;
}

.scrollbar svg:last-child {
    margin-top: auto;
}

.thumb {
    width: 15px;
    height: 57px;
    background: #cdcdcd;
}

/* graphics window */
.viewport {
    flex: 1;
    min-width: 0;
    display: flex;
    flex-direction: column;
    padding-bottom: 5px;
    padding-right: 1px;
    border-left: 1px solid #696969;
}

.scene {
    flex: 1;
    min-height: 0;
    position: relative;
    border-top: 2px solid #696969;
    background: linear-gradient(#6b8bdf, #fff);
}

#scene {
    display: block;
    width: 100%;
    height: 100%;
}

.edges {
    fill: none;
    stroke: #000;
    shape-rendering: crispEdges;
}

.scale-bar text {
    font-size: 12px;
    text-anchor: middle;
}

.scale-bar path {
    shape-rendering: crispEdges;
}

.scale-bar .start {
    text-anchor: start;
}

.triad text {
    font-size: 13px;
}

.brand {
    position: absolute;
    top: 22px;
    right: 24px;
    display: flex;
    flex-direction: column;
    align-items: flex-end;
    color: #fff;
    font-family: Roboto, sans-serif;
    font-size: 17px;
    line-height: 18px;
}

.brand strong {
    font-size: 27px;
    line-height: 30px;
}

.view-tabs {
    display: flex;
    height: 17px;
    flex: none;
    border: 1px solid #000;
    border-left: none;
    background: #f0f0f0;
    font-family: 'DejaVu Sans Condensed', 'DejaVu Sans', sans-serif;
    font-size: 11px;
}

.view-tabs a {
    position: relative;
    padding: 0 4px 0 8px;
    line-height: 15px;
}

.view-tabs a::before,
.view-tabs a::after {
    content: '';
    position: absolute;
    top: 0;
    height: 15px;
    border-left: 1px solid #000;
    transform: skewX(26deg);
    left: 3px;
}

.view-tabs a::after {
    left: auto;
    right: -1px;
    transform: skewX(-26deg);
}

.view-tabs .active {
    background: #fff;
    font-weight: bold;
    padding-left: 10px;
}

/* messages */
.messages {
    position: relative;
    flex: none;
}

.messages h2 {
    padding-right: 20px;
}

.messages-body {
    height: 71px;
    margin-right: 1px;
    background: #a0a0a0;
    border-top: 1px solid #696969;
    border-left: 1px solid #696969;
}

.messages table {
    border-collapse: collapse;
}

.messages th {
    height: 19px;
    padding: 0 3px;
    border: 1px solid #808080;
    background: #f0f0f0;
    font-weight: 400;
    line-height: 18px;
    text-align: left;
}

.messages th:nth-child(1) { width: 51px; }
.messages th:nth-child(2) { width: 465px; }
.messages th:nth-child(3) { width: 305px; }
.messages th:nth-child(4) { width: 220px; }

.badge {
    position: absolute;
    right: -28px;
    top: -16px;
    width: 47px;
    height: 47px;
    padding-left: 3px;
    border: 2px solid #f4f4f4;
    border-radius: 50%;
    background: #fd8a25;
    color: #fff;
    font-weight: bold;
    font-size: 12px;
    box-shadow: 0 0 3px 1px #777, inset 0 0 2px 1px #a50;
}

/* status bar */
.status {
    display: flex;
    gap: 2px;
    height: 29px;
    padding: 4px 0 1px;
    flex: none;
    border-top: 1px solid #fff;
    font-size: 13px;
    line-height: 18px;
}

.cell {
    display: flex;
    align-items: center;
    border: 1px solid #a0a0a0;
    border-right-color: #fff;
    border-bottom-color: #fff;
    padding-left: 2px;
    white-space: nowrap;
}

.cell-a { width: 368px; }
.cell-b { width: 176px; }
.cell-c { width: 148px; }
.cell-d { flex: 1; }
.cell-e { width: 312px; gap: 15px; padding-left: 1px; }

.cell svg {
    width: 16px;
    height: 16px;
    margin-right: 3px;
    overflow: visible;
}

.size-grip {
    width: 14px;
    height: 14px;
    margin: auto 0 0 11px;
}

/* taskbar */
.taskbar {
    display: flex;
    height: 40px;
    flex: none;
    background: linear-gradient(90deg, #0a0a0a 70%, #1a2409 85%, #0c0f08);
    color: #fff;
}

.taskbar::after {
    content: '';
    border-right: 1px solid #555;
    margin-right: 4px;
}

.taskbar > button {
    width: 48px;
    justify-content: center;
}

.taskbar svg {
    width: 16px;
    height: 16px;
}

.taskbar .app {
    width: 49px;
    border-bottom: 2px solid transparent;
    border-top: 2px solid transparent;
}

.taskbar .app svg {
    width: 24px;
    height: 24px;
}

.taskbar .first {
    margin: 0 6px 0 2px;
}

.taskbar .running {
    border-bottom-color: #76a9ef;
    background-clip: padding-box;
}

.taskbar .alert {
    background: #a3571e;
    border-bottom-color: #ff7800;
    border-top-color: #a3571e;
}

.taskbar .current {
    background: #3b3b3b;
    border-top-color: #3b3b3b;
}

.youdao {
    width: 24px;
    height: 24px;
    border-radius: 4px;
    background: #e3191b;
    font-size: 10px;
    line-height: 24px;
    font-weight: bold;
    text-align: center;
}

.tray {
    display: flex;
    margin-left: auto;
}

.tray button {
    width: 24px;
    justify-content: center;
}

.clock {
    display: flex;
    flex-direction: column;
    justify-content: center;
    align-items: center;
    width: 70px;
    margin-left: 12px;
    line-height: 19px;
}

.taskbar .notify {
    width: 44px;
    margin-right: 6px;
}
```
FILE: mesh.js
```js
// Builds the pipe mesh: points are laid out on the unrolled surface,
// triangulated, then wrapped back round the cylinder.
var NS = 'http://www.w3.org/2000/svg';
var model = document.getElementById('model3d');

var seed = 7;
function rnd() {
    seed = (seed * 16807) % 2147483647;
    return seed / 2147483647;
}

function add(tag, attrs) {
    var el = document.createElementNS(NS, tag);
    for (var k in attrs) el.setAttribute(k, attrs[k]);
    model.appendChild(el);
}

// Bowyer-Watson
function circle(pts, a, b, c) {
    var A = pts[a], B = pts[b], C = pts[c];
    var d = 2 * (A[0] * (B[1] - C[1]) + B[0] * (C[1] - A[1]) + C[0] * (A[1] - B[1]));
    var a2 = A[0] * A[0] + A[1] * A[1], b2 = B[0] * B[0] + B[1] * B[1], c2 = C[0] * C[0] + C[1] * C[1];
    var x = (a2 * (B[1] - C[1]) + b2 * (C[1] - A[1]) + c2 * (A[1] - B[1])) / d;
    var y = (a2 * (C[0] - B[0]) + b2 * (A[0] - C[0]) + c2 * (B[0] - A[0])) / d;
    return { v: [a, b, c], x: x, y: y, r: (A[0] - x) * (A[0] - x) + (A[1] - y) * (A[1] - y) };
}

function triangulate(src) {
    var n = src.length;
    var pts = src.concat([[-5000, -4000], [6000, -4100], [500, 8000]]);
    var tris = [circle(pts, n, n + 1, n + 2)];
    for (var i = 0; i < n; i++) {
        var count = {}, keep = [], x = pts[i][0], y = pts[i][1];
        tris.forEach(function (t) {
            if ((x - t.x) * (x - t.x) + (y - t.y) * (y - t.y) < t.r) {
                for (var k = 0; k < 3; k++) {
                    var p = t.v[k], q = t.v[(k + 1) % 3];
                    var key = Math.min(p, q) + '_' + Math.max(p, q);
                    count[key] = count[key] ? null : [p, q];
                }
            } else keep.push(t);
        });
        for (var key in count) {
            if (count[key]) keep.push(circle(pts, count[key][0], count[key][1], i));
        }
        tris = keep;
    }
    return tris.filter(function (t) { return Math.max.apply(null, t.v) < n; });
}

var LEN = 870, R = 44;
var bases = [[222, 12], [661, 12]];

function sizeAt(x, y) {
    var h = 16;
    bases.forEach(function (b) {
        var d = Math.hypot(x - b[0], y - b[1]);
        h = Math.min(h, 3 + 0.18 * Math.max(0, d - 14));
    });
    return h;
}

function wrap(p) {
    var s = p[1] / R;
    return [
        109 + 818 * p[0] / LEN - 14 * Math.cos(s) + 11 * Math.sin(s),
        409 - 296 * p[0] / LEN - 41 * Math.cos(s) - 4 * Math.sin(s)
    ];
}

function pathOf(list) {
    return 'M' + list.map(function (p) { return p[0].toFixed(1) + ' ' + p[1].toFixed(1); }).join('L');
}

function arc(x, from, to) {
    var out = [];
    for (var i = 0; i <= 16; i++) out.push(wrap([x, R * (from + (to - from) * i / 16)]));
    return out;
}

var points = [], row = 0;
for (var y = 0; y <= 139; y += 12.5, row++) {
    for (var x = row % 2 ? 0 : 8; x <= LEN; x += 16.4) {
        if (sizeAt(x, y) > 12) points.push([x + rnd() * 2, y + rnd() * 2]);
    }
}
for (var i = 0; i < 14000; i++) {
    var b = bases[i % 2];
    var px = b[0] + (rnd() - 0.5) * 160, py = rnd() * 110;
    var h = sizeAt(px, py);
    if (h > 13.5) continue;
    var free = points.every(function (q) {
        return Math.hypot(q[0] - px, q[1] - py) > h * 0.85;
    });
    if (free) points.push([px, py]);
}

// end cap, seen edge on
add('path', { d: pathOf(arc(0, 0, 2 * Math.PI)) + 'Z', fill: '#444', stroke: '#000' });
var cap = '';
for (var c = -5; c <= 5; c++) {
    cap += 'M' + (95 + c * 2) + ' 368l29 83M' + (90 + c) + ' ' + (395 + c * 8) + 'l38 -8';
}
add('path', { d: cap, 'class': 'edges', 'clip-path': 'url(#cap)' });
var clip = document.createElementNS(NS, 'clipPath');
clip.id = 'cap';
clip.innerHTML = '<path d="' + pathOf(arc(0, 0, 2 * Math.PI)) + 'Z"/>';
model.appendChild(clip);

var outline = arc(0, 0, Math.PI).concat(arc(LEN, Math.PI, 0));
add('path', { d: pathOf(outline) + 'Z', fill: 'url(#pipe)', stroke: '#000' });

var d = '';
triangulate(points).forEach(function (t) {
    d += pathOf(t.v.map(function (k) { return wrap(points[k]); })) + 'Z';
});
add('path', { d: d, 'class': 'edges' });

// branch pipes
function stub(x, y) {
    var body = 'M' + x + ' ' + (y + 9) + 'c0 -8 27 -13 27 -3l21 108q-8 12 -24 6z';
    add('path', { d: body, fill: 'url(#stub)', stroke: '#000', 'stroke-width': 2 });
    var lines = '';
    for (var r = 0; r < 46; r++) {
        var oy = y + 8 + r * 2.5, ox = x + r * 0.5;
        for (var a = 0; a < 14; a++) {
            var t0 = Math.PI * a / 14, t1 = Math.PI * (a + 1) / 14;
            var x0 = ox + 13.5 - 13.5 * Math.cos(t0), x1 = ox + 13.5 - 13.5 * Math.cos(t1);
            var y0 = oy + 3 * Math.sin(t0) + (r + a) % 2, y1 = oy + 3 * Math.sin(t1) + rnd() * 2;
            lines += 'M' + x0.toFixed(1) + ' ' + y0.toFixed(1) + 'L' + x1.toFixed(1) + ' ' + y1.toFixed(1);
            if (rnd() > 0.3) lines += 'l' + ((a + r) % 2 ? 0.8 : -0.8) + ' 2.5';
        }
    }
    add('path', { d: lines, 'class': 'edges' });
    add('ellipse', { cx: x + 13.5, cy: y + 7, rx: 13, ry: 6, fill: '#777', stroke: '#000' });
    var dots = '';
    for (var k = 0; k < 60; k++) {
        dots += 'M' + (x + 4 + rnd() * 18).toFixed(0) + ' ' + (y + 3 + rnd() * 7).toFixed(0) + 'l2 1';
    }
    add('path', { d: dots, 'class': 'edges' });
}
stub(270, 180);
stub(680, 32);
```
